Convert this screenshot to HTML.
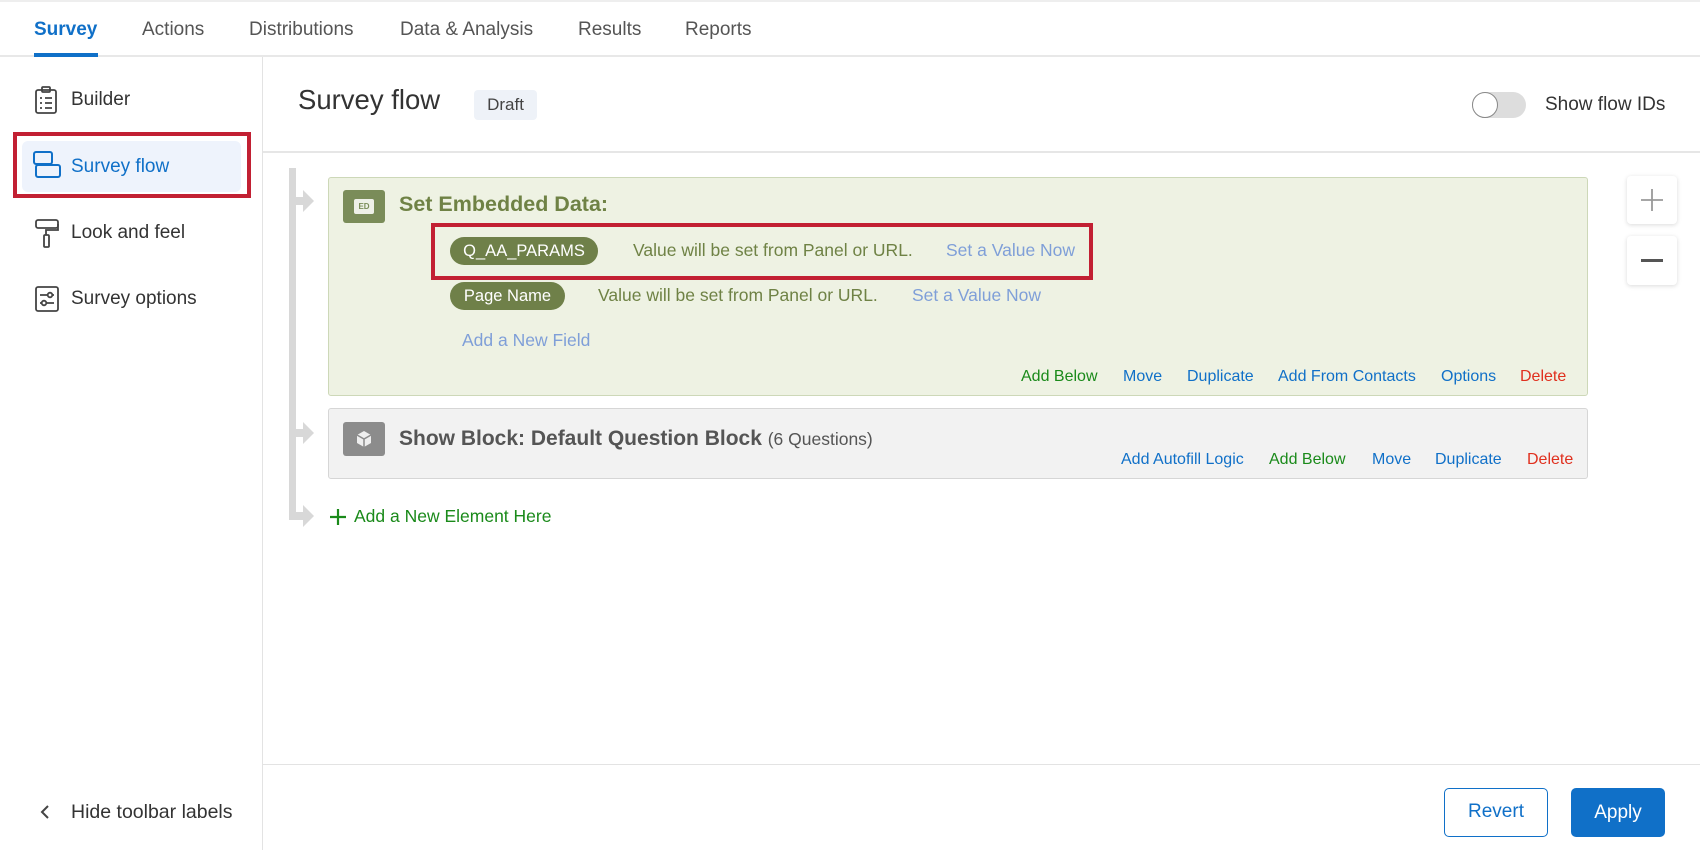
<!DOCTYPE html>
<html><head><meta charset="utf-8"><style>
*{margin:0;padding:0;box-sizing:border-box}
body{width:1700px;height:850px;position:relative;background:#fff;font-family:"Liberation Sans",Arial,sans-serif;overflow:hidden;color:#333}
.a{position:absolute;white-space:nowrap}
.t{font-size:19px;line-height:20px;color:#555}
.s{font-size:19px;line-height:20px;color:#333}
.f{font-size:17.5px;line-height:18px}
.k{font-size:16px;line-height:18px}
.g{color:#1a8a1a}.b{color:#1070c8}.r{color:#e0301e}.lb{color:#7f9fd8}.ol{color:#6f8245}
.pill{background:#6f8049;color:#fff;border-radius:14px;font-size:16.5px;line-height:28px;text-align:center}
</style></head><body>
<div class="a" style="left:0;top:0;width:1700px;height:2px;background:#eee"></div>
<div class="a" style="left:0;top:55px;width:1700px;height:2px;background:#e8e8e8"></div>
<div class="a t" style="left:34px;top:20px;color:#1070c8;font-weight:bold">Survey</div>
<div class="a" style="left:34px;top:53px;width:64px;height:4px;background:#1070c8"></div>
<div class="a t" style="left:142px;top:20px">Actions</div>
<div class="a t" style="left:249px;top:20px">Distributions</div>
<div class="a t" style="left:400px;top:20px">Data &amp; Analysis</div>
<div class="a t" style="left:578px;top:20px">Results</div>
<div class="a t" style="left:685px;top:20px">Reports</div>

<div class="a" style="left:262px;top:57px;width:1px;height:793px;background:#e3e3e3"></div>
<svg class="a" style="left:34px;top:86px" width="24" height="28" viewBox="0 0 24 28" fill="none" stroke="#444" stroke-width="1.8"><rect x="2" y="4" width="20" height="23" rx="2"/><rect x="8" y="1" width="8" height="5" rx="1"/><path d="M6 12h2M11 12h7M6 17h2M11 17h7M6 22h2M11 22h7"/></svg>
<div class="a s" style="left:71px;top:90px">Builder</div>
<div class="a" style="left:22px;top:141px;width:219px;height:51px;background:#eef3fc;border-radius:6px"></div>
<div class="a" style="left:13px;top:132px;width:238px;height:66px;border:4px solid #c22033"></div>
<svg class="a" style="left:33px;top:150px" width="28" height="30" viewBox="0 0 28 30" fill="none" stroke="#1070c8" stroke-width="2"><rect x="1" y="2" width="18" height="12" rx="2"/><rect x="3" y="15" width="24" height="12" rx="2"/></svg>
<div class="a s" style="left:71px;top:157px;color:#1070c8">Survey flow</div>
<svg class="a" style="left:34px;top:218px" width="26" height="30" viewBox="0 0 26 30" fill="none" stroke="#444" stroke-width="1.8"><rect x="2" y="2" width="22" height="8" rx="2"/><path d="M24 6v6H12v5"/><rect x="10" y="17" width="5" height="12" rx="1"/></svg>
<div class="a s" style="left:71px;top:223px">Look and feel</div>
<svg class="a" style="left:34px;top:285px" width="26" height="28" viewBox="0 0 26 28" fill="none" stroke="#444" stroke-width="1.8"><rect x="2" y="2" width="22" height="24" rx="2"/><path d="M6 10h14M6 18h14"/><circle cx="16" cy="10" r="2.3" fill="#fff"/><circle cx="10" cy="18" r="2.3" fill="#fff"/></svg>
<div class="a s" style="left:71px;top:289px">Survey options</div>
<svg class="a" style="left:40px;top:804px" width="10" height="16" viewBox="0 0 10 16" fill="none" stroke="#444" stroke-width="2"><path d="M8 2L2 8l6 6"/></svg>
<div class="a s" style="left:71px;top:802px;font-size:19.5px">Hide toolbar labels</div>

<div class="a" style="left:298px;top:85px;font-size:27.5px;line-height:30px;color:#333">Survey flow</div>
<div class="a" style="left:474px;top:90px;width:63px;height:30px;background:#eef2f8;border-radius:4px;font-size:17px;line-height:30px;text-align:center;color:#444">Draft</div>
<div class="a" style="left:1472px;top:92px;width:54px;height:26px;background:#ddd;border-radius:13px"></div>
<div class="a" style="left:1472px;top:92px;width:26px;height:26px;background:#fff;border:1.5px solid #888;border-radius:50%"></div>
<div class="a s" style="left:1545px;top:95px">Show flow IDs</div>
<div class="a" style="left:263px;top:151px;width:1437px;height:2px;background:#e6e6e6"></div>

<div class="a" style="left:289px;top:168px;width:7px;height:352px;background:#d8d8d8"></div>
<svg class="a" style="left:289px;top:188px" width="26" height="26"><path d="M0 9h14V2l11 11-11 11v-7H0z" fill="#d8d8d8"/></svg>
<svg class="a" style="left:289px;top:420px" width="26" height="26"><path d="M0 9h14V2l11 11-11 11v-7H0z" fill="#d8d8d8"/></svg>
<svg class="a" style="left:289px;top:503px" width="26" height="26"><path d="M0 9h14V2l11 11-11 11v-7H0z" fill="#d8d8d8"/></svg>

<div class="a" style="left:328px;top:177px;width:1260px;height:219px;background:#eef2e3;border:1.5px solid #cdd8b8;border-radius:3px"></div>
<div class="a" style="left:343px;top:190px;width:42px;height:33px;background:#7a8c59;border-radius:3px"></div>
<div class="a" style="left:354px;top:199px;width:20px;height:15px;background:#eef0e8;border-radius:2px;font-size:8px;line-height:15px;text-align:center;color:#7a8c59;font-weight:bold">ED</div>
<div class="a" style="left:399px;top:192px;font-size:21.5px;line-height:24px;font-weight:bold;color:#6f8245">Set Embedded Data:</div>
<div class="a" style="left:431px;top:223px;width:662px;height:57px;border:4px solid #c22033"></div>
<div class="a pill" style="left:450px;top:237px;width:148px">Q_AA_PARAMS</div>
<div class="a f ol" style="left:633px;top:241px">Value will be set from Panel or URL.</div>
<div class="a f lb" style="left:946px;top:241px">Set a Value Now</div>
<div class="a pill" style="left:450px;top:282px;width:115px">Page Name</div>
<div class="a f ol" style="left:598px;top:286px">Value will be set from Panel or URL.</div>
<div class="a f lb" style="left:912px;top:286px">Set a Value Now</div>
<div class="a f lb" style="left:462px;top:331px">Add a New Field</div>
<div class="a k g" style="left:1021px;top:368px">Add Below</div>
<div class="a k b" style="left:1123px;top:368px">Move</div>
<div class="a k b" style="left:1187px;top:368px">Duplicate</div>
<div class="a k b" style="left:1278px;top:368px">Add From Contacts</div>
<div class="a k b" style="left:1441px;top:368px">Options</div>
<div class="a k r" style="left:1520px;top:368px">Delete</div>

<div class="a" style="left:328px;top:408px;width:1260px;height:71px;background:#f2f2f2;border:1.5px solid #d6d6d6;border-radius:3px"></div>
<div class="a" style="left:343px;top:422px;width:42px;height:34px;background:#8c8c8c;border-radius:3px"></div>
<svg class="a" style="left:355px;top:430px" width="18" height="18" viewBox="0 0 18 18"><path d="M9 1l7 4v8l-7 4-7-4V5z" fill="#eee"/><path d="M2 5l7 4 7-4M9 9v8" stroke="#8c8c8c" stroke-width="1.5" fill="none"/></svg>
<div class="a" style="left:399px;top:427px;font-size:21px;line-height:24px;font-weight:bold;color:#555">Show Block: Default Question Block <span style="font-weight:normal;font-size:17.5px">(6 Questions)</span></div>
<div class="a k b" style="left:1121px;top:451px">Add Autofill Logic</div>
<div class="a k g" style="left:1269px;top:451px">Add Below</div>
<div class="a k b" style="left:1372px;top:451px">Move</div>
<div class="a k b" style="left:1435px;top:451px">Duplicate</div>
<div class="a k r" style="left:1527px;top:451px">Delete</div>
<svg class="a" style="left:329px;top:508px" width="18" height="18"><path d="M9 1v16M1 9h16" stroke="#1a8a1a" stroke-width="2.2"/></svg>
<div class="a f g" style="left:354px;top:507px">Add a New Element Here</div>

<div class="a" style="left:1627px;top:176px;width:50px;height:48px;background:#fff;border-radius:4px;box-shadow:0 1px 5px rgba(0,0,0,.15)"></div>
<svg class="a" style="left:1640px;top:188px" width="24" height="24"><path d="M12 1v22M1 12h22" stroke="#999" stroke-width="1.8"/></svg>
<div class="a" style="left:1627px;top:236px;width:50px;height:49px;background:#fff;border-radius:4px;box-shadow:0 1px 5px rgba(0,0,0,.15)"></div>
<div class="a" style="left:1641px;top:259px;width:22px;height:2.5px;background:#555"></div>

<div class="a" style="left:263px;top:764px;width:1437px;height:1px;background:#e3e3e3"></div>
<div class="a" style="left:1444px;top:788px;width:104px;height:49px;border:1.5px solid #1070c8;border-radius:5px;color:#1070c8;font-size:19px;line-height:46px;text-align:center">Revert</div>
<div class="a" style="left:1571px;top:788px;width:94px;height:49px;background:#1070c8;border-radius:5px;color:#fff;font-size:19px;line-height:49px;text-align:center">Apply</div>
</body></html>
